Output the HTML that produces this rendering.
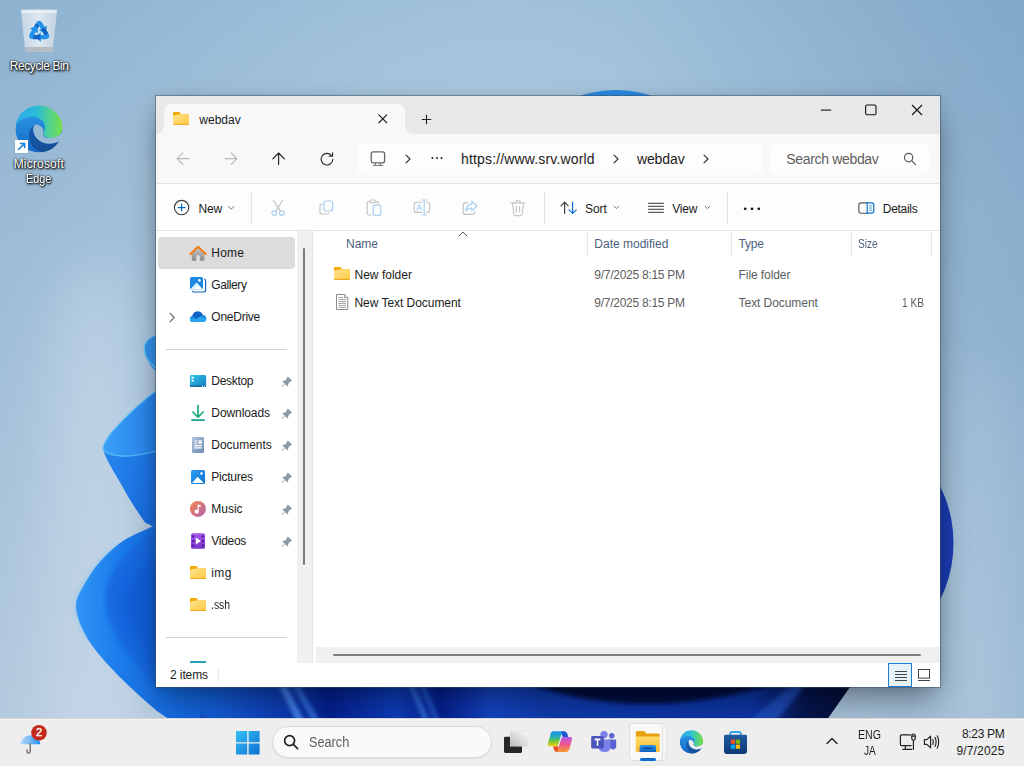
<!DOCTYPE html>
<html><head><meta charset="utf-8"><title>webdav - File Explorer</title>
<style>
*{box-sizing:border-box;margin:0;padding:0}
html,body{width:1024px;height:766px;overflow:hidden}
body{font-family:"Liberation Sans","DejaVu Sans",sans-serif;font-size:12px;color:#1b1b1b;position:relative;background:#a9c3d8}
#wall{position:absolute;left:0;top:0;width:1024px;height:766px}
.b{position:absolute}
.t{position:absolute;white-space:nowrap;line-height:1;font-size:12px;transform-origin:0 0}
.f14{font-size:14px}
.hd{color:#4c5f7d}
.gr{color:#5d5d5d}
.dt{color:#fff;text-shadow:0 0 2px rgba(0,0,0,.95),1px 1px 2px rgba(0,0,0,.9),0 1px 3px rgba(0,0,0,.7)}
svg{position:absolute;overflow:visible}
#win{left:156px;top:96px;width:784px;height:591px;background:#fff;box-shadow:0 0 0 1px rgba(60,78,98,.5),0 0 10px rgba(0,0,0,.08),0 14px 30px -4px rgba(0,0,0,.42)}
#titlebar{left:156px;top:96px;width:784px;height:39px;background:#e8e8e8}
#tab{left:164px;top:104px;width:241px;height:31px;background:#f8f8f8;border-radius:7px 7px 0 0}
#tabl{left:156px;top:126px;width:8px;height:9px;background:radial-gradient(circle at 0 0,#e8e8e8 7.5px,#f8f8f8 8.2px)}
#tabr{left:405px;top:126px;width:8px;height:9px;background:radial-gradient(circle at 100% 0,#e8e8e8 7.5px,#f8f8f8 8.2px)}
#navbar{left:156px;top:134px;width:784px;height:50px;background:#f8f8f8;border-bottom:1px solid #e3e3e3}
#addr{left:357px;top:143px;width:406px;height:32px;background:#fdfdfd;border-radius:5px}
#search{left:771px;top:143px;width:158px;height:32px;background:#fdfdfd;border-radius:5px}
#cmdbar{left:156px;top:184px;width:784px;height:47px;background:#fdfdfd;border-bottom:1px solid #e4e4e4}
.sep{width:1px;background:#e3e3e3}
#navpane{left:156px;top:231px;width:141px;height:432px;background:#fff}
#navtrack{left:297px;top:231px;width:15px;height:432px;background:#f0f0f0}
#files{left:312px;top:231px;width:628px;height:432px;background:#fff;border-left:1px solid #e6e6e6}
#status{left:156px;top:663px;width:784px;height:24px;background:#fff}
#taskbar{left:0;top:718px;width:1024px;height:48px;background:#eeeeee;border-top:1px solid #d6d5d3;box-shadow:inset 0 1px 0 #f4f4f4}
</style></head><body>
<svg id="wall" viewBox="0 0 1024 766">
<defs>
<linearGradient id="bgv" x1="0" y1="0" x2="0" y2="1"><stop offset="0" stop-color="#8bb0ce"/><stop offset="0.5" stop-color="#a3bfd8"/><stop offset="1" stop-color="#b6cbde"/></linearGradient>
<radialGradient id="bgc" cx="500" cy="200" r="560" gradientUnits="userSpaceOnUse"><stop offset="0" stop-color="#b7d3e6" stop-opacity=".75"/><stop offset="1" stop-color="#b7d3e6" stop-opacity="0"/></radialGradient>
<linearGradient id="bgr" x1="0" y1="0" x2="1" y2="0"><stop offset="0.6" stop-color="#6f9bbf" stop-opacity="0"/><stop offset="1" stop-color="#6f9bbf" stop-opacity=".36"/></linearGradient>
<linearGradient id="p2" x1="0" y1="0" x2="1" y2="1"><stop offset="0" stop-color="#2c8ef2"/><stop offset="1" stop-color="#1569de"/></linearGradient>
<linearGradient id="p2i" x1="0" y1="0" x2="1" y2="0"><stop offset="0" stop-color="#3b9ff6"/><stop offset="1" stop-color="#2380ea"/></linearGradient>
<linearGradient id="p3" x1="0" y1="0" x2="1" y2="0"><stop offset="0" stop-color="#2e94f5"/><stop offset="0.35" stop-color="#1c7bea"/><stop offset="1" stop-color="#1262da"/></linearGradient>
<linearGradient id="bot" x1="200" y1="0" x2="850" y2="0" gradientUnits="userSpaceOnUse"><stop offset="0" stop-color="#1262da"/><stop offset="0.06" stop-color="#1150c8"/><stop offset="0.12" stop-color="#0d3eb4"/><stop offset="0.2" stop-color="#041f8e"/><stop offset="0.3" stop-color="#0d3cb8"/><stop offset="0.37" stop-color="#041f8e"/><stop offset="0.45" stop-color="#1444c0"/><stop offset="0.53" stop-color="#0e3aac"/><stop offset="0.85" stop-color="#0c34a2"/><stop offset="0.93" stop-color="#06164f"/><stop offset="1" stop-color="#040d36"/></linearGradient>
<filter id="bl"><feGaussianBlur stdDeviation="5"/></filter>
<filter id="bl3" x="-100%" y="-50%" width="300%" height="200%"><feGaussianBlur stdDeviation="28"/></filter>
<filter id="bl2"><feGaussianBlur stdDeviation="2"/></filter>
</defs>
<rect width="1024" height="766" fill="url(#bgv)"/>
<rect width="1024" height="766" fill="url(#bgc)"/>
<rect width="1024" height="766" fill="url(#bgr)"/>
<ellipse cx="95" cy="640" rx="55" ry="380" fill="#cfdeec" opacity=".55" filter="url(#bl3)"/><ellipse cx="978" cy="660" rx="32" ry="300" fill="#bdd2e4" opacity=".45" filter="url(#bl3)"/>
<ellipse cx="616" cy="130" rx="69" ry="40" fill="#2a8ae2"/>
<ellipse cx="841" cy="543" rx="112.500" ry="120" fill="#1b3cb2"/>
<path d="M170 560L860 560L850 687L827.500 719L170 719Z" fill="url(#bot)"/>
<g filter="url(#bl2)"><path d="M278 684L285 684L305 722L297 722Z" fill="#4a8cf0" opacity=".9"/><path d="M292 684L298 684L320 722L313 722Z" fill="#3a7ae4" opacity=".8"/><path d="M408 684L413 684L430 722L424 722Z" fill="#3a78e2" opacity=".8"/><path d="M419 684L424 684L440 722L435 722Z" fill="#2e68d8" opacity=".7"/><path d="M530 684Q640 724 775 684Z" fill="#050f40"/><path d="M748 722L792 684L806 684L775 722Z" fill="#2050c0" opacity=".8"/><path d="M165 688L215 722L170 722Z" fill="#0d46b6" opacity=".7"/></g>
<!-- petal 1 -->
<path d="M160 333.500C151 336.500 144.200 341 144.200 348C144.500 358 150 366 160 376Z" fill="#3492ee"/>
<path d="M160 333.500C151 336.500 144.200 341 144.200 348C144.500 358 150 364 160 371" fill="none" stroke="#62c6fa" stroke-width="1.200"/>
<!-- petal 2 -->
<path d="M160 388C146 398 126 416 112 432C106 440 103 445 103 449C105 458 113 470 120.500 483C126 493 132 504 145 522.500L160 530Z" fill="url(#p2)"/>
<path d="M160 388C146 398 126 416 112 432C106 440 103 445 103 449C105 453 112 455.500 122 456C135 456.500 150 453 160 450Z" fill="url(#p2i)"/>
<path d="M160 388C146 398 126 416 112 432C106 440 103 445 103 449C105 453 112 455.500 122 456C135 456.500 150 453 160 450" fill="none" stroke="#58bcfa" stroke-width="1.300"/>
<!-- petal 3 -->
<path d="M160 519L156 525C140 532 128 537 118.700 544C106 554 96 565 89.400 576C82 588 76 597 76 605.700C76 616 82 630 89 641C97 653 108 665 118.700 676C131 688 145 701 157 711L168.700 719L200 719L200 519Z" fill="url(#p3)"/>
<path d="M165 525C150 533 142 540 133.400 547C126 554 120 560 115.800 567.500C109 579 105.500 588 105.500 597C105.500 606 107 615 110 623C114 633 120 643 127.500 652.700C136 664 146 676 165 695Z" fill="#1466de" filter="url(#bl2)" opacity=".85"/>
<path d="M175 545C150 560 125 580 122 600C121 620 140 650 175 690Z" fill="#0f58d2" filter="url(#bl)" opacity=".6"/>
<path d="M118.700 544C106 554 96 565 89.400 576C82 588 76 597 76 605.700C76 616 82 630 89 641" fill="none" stroke="#4aaef8" stroke-width="1.500" opacity=".6" filter="url(#bl2)"/>
</svg>
<!-- shared defs -->
<svg width="0" height="0" style="left:0;top:0"><defs>
<linearGradient id="ed1" x1="0" y1="0" x2="0" y2="1"><stop offset="0" stop-color="#2b9fea"/><stop offset="1" stop-color="#1769c6"/></linearGradient>
<linearGradient id="ed2" x1="0" y1="0" x2="1" y2="0"><stop offset="0" stop-color="#2fa6ec"/><stop offset=".45" stop-color="#2bbcd8"/><stop offset=".72" stop-color="#4fd090"/><stop offset=".95" stop-color="#72de50"/></linearGradient>
<linearGradient id="ed3" x1="0" y1="0" x2="1" y2="1"><stop offset="0" stop-color="#165cae"/><stop offset="1" stop-color="#114a90"/></linearGradient>
<mask id="edm" maskUnits="userSpaceOnUse" x="0" y="0" width="48" height="48"><circle cx="24" cy="24" r="23.600" fill="#fff"/><path d="M20.500 19.500C24 19.500 28.500 22 28.500 26.500C28.500 28.500 27.600 29.500 28.500 31C30 33.200 36 33.600 40 32.200C43 31.200 45.500 29.500 47 27L49 30L44.600 36C40 38.600 34 39.600 29 38C23 36 18.500 31 18.300 25C18.200 22 19 20.500 20.500 19.500Z" fill="#000"/></mask>
<g id="edgeicon" mask="url(#edm)"><circle cx="24" cy="24" r="23.600" fill="url(#ed1)"/><path d="M20.500 19.500C17 21 13 26 14 33C15 41 22 47.600 30 47.600C38 47 43.500 41 44.600 36C40 38.600 34 39.600 29 38C23 36 18.500 31 18.300 25C18.200 22 19 20.500 20.500 19.500Z" fill="url(#ed3)"/><path d="M.3 21C5 14 12 11.500 18 11.800C25 12 30 17 30 22C30 25 28.500 27 28.500 29C28.500 33.400 36 34 41 32.200C45.500 30.500 47.800 26 47.600 22A23.600 23.600 0 0 0 .3 21Z" fill="url(#ed2)"/></g>
</defs></svg>
<!-- recycle bin -->
<svg style="left:20px;top:9px" width="38" height="44" viewBox="0 0 38 44"><defs><linearGradient id="rb" x1="0" y1="0" x2="1" y2="0"><stop offset="0" stop-color="#c9d8e6"/><stop offset=".5" stop-color="#e3ebf2"/><stop offset="1" stop-color="#c6d5e3"/></linearGradient></defs><path d="M.9 1.400Q.8 .6 1.800 .6H36.200Q37.200 .6 37.100 1.400L32.800 41.600Q32.700 42.800 31.600 42.800H6.400Q5.300 42.800 5.200 41.600Z" fill="url(#rb)" opacity=".92"/><path d="M1.200 1.200H36.800L36.400 4H1.600Z" fill="#eef3f8" opacity=".8"/><path d="M4.800 38H33.200L32.800 41.600Q32.700 42.800 31.600 42.800H6.400Q5.300 42.800 5.200 41.600Z" fill="#b4bcc4"/><g transform="translate(19.200 23) scale(1.020)"><g id="rarr"><path d="M-5 -1.200L-1.300 -7.700" stroke="#1365c4" stroke-width="4.300" fill="none"/><path d="M-1.300 -7.700Q0 -9.900 1.300 -7.700L3.500 -3.900" stroke="#2192ec" stroke-width="4.300" fill="none" stroke-linejoin="round"/><path d="M7.700 -6.300L-.5 -1.500L6.200 1.300Z" fill="#2192ec"/></g><use href="#rarr" transform="rotate(120)"/><use href="#rarr" transform="rotate(240)"/></g></svg>
<!-- edge desktop -->
<svg style="left:15px;top:105px" width="48" height="48" viewBox="0 0 48 48"><use href="#edgeicon"/></svg>
<div class="b" style="left:15px;top:140px;width:13px;height:13px;background:#fff;box-shadow:0 0 1px rgba(0,0,0,.3)"></div>
<svg style="left:15px;top:140px" width="13" height="13" viewBox="0 0 13 13"><path d="M3.200 9.800L9.400 3.600M4.800 3.400H9.600V8.200" fill="none" stroke="#1a7fd8" stroke-width="1.500"/></svg>
<div class="b" id="win"></div>
<div class="b" id="titlebar"></div>
<div class="b" id="tab"></div><div class="b" id="tabl"></div><div class="b" id="tabr"></div>
<div class="b" id="navbar"></div>
<div class="b" id="addr"></div><div class="b" id="search"></div>
<div class="b" id="cmdbar"></div>
<div class="b" id="navpane"></div><div class="b" id="navtrack"></div>
<div class="b" id="files"></div>
<div class="b" id="status"></div>
<!-- title bar icons -->
<svg style="left:172px;top:111px" width="18" height="15" viewBox="0 0 18 15"><defs><linearGradient id="fg" x1="0" y1="0" x2="1" y2="1"><stop offset="0" stop-color="#ffe595"/><stop offset="1" stop-color="#ffc83d"/></linearGradient></defs><path d="M1 2.2Q1 1 2.2 1H6.6Q7.4 1 8 1.7L9.2 3.2H15.8Q17 3.200 17 4.400V6H1Z" fill="#f2a900"/><path d="M1 5.400Q1 4.600 2 4.400L8 3.200H15.800Q17 3.200 17 4.400V12.800Q17 14 15.800 14H2.200Q1 14 1 12.800Z" fill="url(#fg)"/><path d="M1.200 13.300H16.800" stroke="#eea41c" stroke-width="1"/></svg>
<svg style="left:377.500px;top:114px" width="10" height="10" viewBox="0 0 10 10"><path d="M.6 .6L9 9M9 .6L.6 9" stroke="#1f1f1f" stroke-width="1.100" fill="none"/></svg>
<svg style="left:421px;top:114px" width="11" height="11" viewBox="0 0 11 11"><path d="M5.500 .8V10.200M.8 5.500H10.200" stroke="#1f1f1f" stroke-width="1.100" fill="none"/></svg>
<svg style="left:820px;top:104px" width="104" height="12" viewBox="0 0 104 12"><g stroke="#111" stroke-width="1.100" fill="none"><path d="M.8 6.100H11.200"/><rect x="45.600" y="1" width="10.400" height="9.800" rx="1.600"/><path d="M92 1L102 11M102 1L92 11"/></g></svg>
<!-- nav bar icons -->
<svg style="left:176px;top:152px" width="160" height="14" viewBox="0 0 160 14"><g fill="none" stroke-width="1.150" stroke-linecap="round" stroke-linejoin="round"><path d="M13 6.600H1.200M6.800 .8L1 6.600L6.800 12.400" stroke="#b9b9b9"/><path d="M49 6.600H60.800M55.200 .8L61 6.600L55.200 12.400" stroke="#b9b9b9"/><path d="M102.600 12.600V1M96.800 6.800L102.600 1L108.400 6.800" stroke="#242424"/><path d="M155.400 3.400A5.800 5.800 0 1 0 156.800 7.200M156.600 .8V4.200H153.200" stroke="#2c2c2c"/></g></svg>
<svg style="left:370px;top:151px" width="76" height="16" viewBox="0 0 76 16"><g fill="none" stroke-linecap="round" stroke-linejoin="round"><rect x="1.200" y=".8" width="13.400" height="11" rx="2" stroke="#666" stroke-width="1.300"/><path d="M5.400 12V14.300M10.400 12V14.300M3.200 14.500H12.600" stroke="#777" stroke-width="1.200"/><path d="M36 4.200L40 8L36 11.800" stroke="#333" stroke-width="1.150"/></g><g fill="#222"><circle cx="62.400" cy="7" r="1"/><circle cx="67" cy="7" r="1"/><circle cx="71.500" cy="7" r="1"/></g></svg>
<svg style="left:612px;top:154px" width="100" height="10" viewBox="0 0 100 10"><g fill="none" stroke="#333" stroke-width="1.150" stroke-linecap="round" stroke-linejoin="round"><path d="M2 1.200L6 5L2 8.800"/><path d="M92 1.200L96 5L92 8.800"/></g></svg>
<svg style="left:903px;top:152px" width="14" height="14" viewBox="0 0 14 14"><g fill="none" stroke="#555" stroke-width="1.150" stroke-linecap="round"><circle cx="5.600" cy="5.600" r="4.200"/><path d="M8.700 8.700L12.600 12.600"/></g></svg>
<!-- command bar -->
<svg style="left:173px;top:199px" width="64" height="18" viewBox="0 0 64 18"><g fill="none" stroke-linecap="round" stroke-linejoin="round"><circle cx="8.600" cy="8.600" r="7.200" stroke="#3a3a3a" stroke-width="1.100"/><path d="M8.600 5.200V12M5.200 8.600H12" stroke="#0067c0" stroke-width="1.200"/><path d="M55.600 7.600L58.200 10.200L60.800 7.600" stroke="#777" stroke-width="1"/></g></svg>
<div class="b sep" style="left:251px;top:192px;height:32px"></div>
<svg style="left:270px;top:199px" width="16" height="18" viewBox="0 0 16 18"><g fill="none" stroke-linecap="round"><path d="M3.400 1.200L10.400 12.400M12.600 1.200L5.600 12.400" stroke="#c2c2c2" stroke-width="1.150"/><circle cx="4.200" cy="14" r="2.300" stroke="#a9cef2" stroke-width="1.150"/><circle cx="11.800" cy="14" r="2.300" stroke="#a9cef2" stroke-width="1.150"/></g></svg>
<svg style="left:319px;top:200px" width="16" height="16" viewBox="0 0 16 16"><g fill="none" stroke-linejoin="round"><path d="M3.400 4.200H2.600Q1 4.200 1 5.800V12.400Q1 14 2.600 14H8.200Q9.800 14 9.800 12.800" stroke="#c2c2c2" stroke-width="1.150"/><rect x="4.800" y="1" width="8.800" height="10" rx="2" stroke="#a9cef2" stroke-width="1.200"/></g></svg>
<svg style="left:366px;top:199px" width="17" height="18" viewBox="0 0 17 18"><g fill="none" stroke-linejoin="round"><path d="M5.600 16H2.600Q1.200 16 1.200 14.600V4Q1.200 2.600 2.600 2.600H4M9.600 2.600H11Q12.400 2.600 12.400 4V5.200" stroke="#c2c2c2" stroke-width="1.150"/><rect x="4.200" y="1" width="5.200" height="2.600" rx="1.200" stroke="#c2c2c2" stroke-width="1.100"/><rect x="7.200" y="6.200" width="7.600" height="10.200" rx="1.600" stroke="#a9cef2" stroke-width="1.200"/></g></svg>
<svg style="left:413px;top:199px" width="18" height="18" viewBox="0 0 18 18"><g fill="none" stroke-linecap="round" stroke-linejoin="round"><path d="M8.600 3.200H3.400Q1.200 3.200 1.200 5.400V11.200Q1.200 13.400 3.400 13.400H8.600M13.600 3.200H14.600Q16.600 3.200 16.600 5.400V11.200Q16.600 13.400 14.600 13.400H13.600" stroke="#c2c2c2" stroke-width="1.150"/><path d="M11.200 1.200V15.800M9.400 1H13M9.400 16H13" stroke="#a9cef2" stroke-width="1.200"/><path d="M4 11.200L6.300 5.400L8.600 11.200M4.900 9.200H7.700" stroke="#a9cef2" stroke-width="1"/></g></svg>
<svg style="left:462px;top:200px" width="17" height="16" viewBox="0 0 17 16"><g fill="none" stroke-linecap="round" stroke-linejoin="round"><path d="M5.600 2.800H3.400Q1.200 2.800 1.200 5V12.200Q1.200 14.400 3.400 14.400H10.600Q12.800 14.400 12.800 12.200V11.600" stroke="#c2c2c2" stroke-width="1.150"/><path d="M9.800 1.400L15 6L9.800 10.600V8Q6 7.800 3.800 10.800Q4.400 4.800 9.800 4.200Z" stroke="#a9cef2" stroke-width="1.200"/></g></svg>
<svg style="left:510px;top:199px" width="16" height="18" viewBox="0 0 16 18"><g fill="none" stroke="#c6c6c6" stroke-width="1.150" stroke-linecap="round" stroke-linejoin="round"><path d="M1 3.800H15M5.600 3.600Q5.600 1.200 8 1.200Q10.400 1.200 10.400 3.600M2.600 4L3.800 14.800Q4 16.600 5.600 16.600H10.400Q12 16.600 12.200 14.800L13.400 4M6.400 7.200V13M9.600 7.200V13"/></g></svg>
<div class="b sep" style="left:544px;top:192px;height:32px"></div>
<svg style="left:560px;top:201px" width="60" height="14" viewBox="0 0 60 14"><g fill="none" stroke-linecap="round" stroke-linejoin="round" stroke-width="1.200"><path d="M4.600 12.400V1.200M1 4.800L4.600 1.200L8.200 4.800" stroke="#444"/><path d="M12.600 1.200V12.400M9 8.800L12.600 12.400L16.200 8.800" stroke="#0a6fd0"/><path d="M54 5.200L56.400 7.600L58.800 5.200" stroke="#777" stroke-width="1"/></g></svg>
<svg style="left:648px;top:202px" width="64" height="12" viewBox="0 0 64 12"><g fill="none" stroke-linecap="round" stroke-linejoin="round"><path d="M.5 1.300H15.500M.5 4.300H15.500M.5 7.300H15.500M.5 10.300H15.500" stroke="#333" stroke-width="1"/><path d="M57 4.200L59.400 6.600L61.800 4.200" stroke="#777" stroke-width="1"/></g></svg>
<div class="b sep" style="left:727px;top:192px;height:32px"></div>
<svg style="left:743px;top:206px" width="18" height="5" viewBox="0 0 18 5"><g fill="#1a1a1a"><circle cx="2.200" cy="2.800" r="1.400"/><circle cx="9" cy="2.800" r="1.400"/><circle cx="15.800" cy="2.800" r="1.400"/></g></svg>
<svg style="left:858px;top:202px" width="17" height="12" viewBox="0 0 17 12"><g fill="none" stroke-linecap="round" stroke-linejoin="round"><path d="M9 .8H3Q.8 .8 .8 3V9Q.8 11.200 3 11.200H9" stroke="#555" stroke-width="1.150"/><path d="M9.200 .8H13.600Q15.800 .8 15.800 3V9Q15.800 11.200 13.600 11.200H9.200Z" stroke="#0a6fd0" stroke-width="1.200"/><path d="M11.600 3.800H13.400M11.600 6H13.400M11.600 8.200H13.400" stroke="#0a6fd0" stroke-width=".8"/></g></svg>
<!-- nav pane -->
<div class="b" style="left:158px;top:237px;width:137px;height:32px;background:#dcdcdc;border-radius:4px"></div>
<div class="b" style="left:303px;top:248px;width:2px;height:317px;background:#7c7c7c;border-radius:1px"></div>
<div class="b" style="left:166px;top:349px;width:121px;height:1px;background:#d4d4d4"></div>
<div class="b" style="left:166px;top:637px;width:121px;height:1px;background:#d4d4d4"></div>
<div class="b" style="left:190px;top:661px;width:16px;height:2px;background:#2aa0b8"></div>
<svg style="left:168px;top:312px" width="8" height="11" viewBox="0 0 8 11"><path d="M2 1.200L6.200 5.500L2 9.800" fill="none" stroke="#6a6a6a" stroke-width="1.200" stroke-linecap="round" stroke-linejoin="round"/></svg>
<!-- home -->
<svg style="left:189px;top:244px" width="18" height="18" viewBox="0 0 18 18"><defs><linearGradient id="hg" x1="0" y1="0" x2="0" y2="1"><stop offset="0" stop-color="#c9c9c9"/><stop offset="1" stop-color="#8b8b8b"/></linearGradient></defs><path d="M2.800 9L9.100 3.200L15.400 9V15.800Q15.400 16.800 14.400 16.800H10.900V11.200H7.300V16.800H3.800Q2.800 16.800 2.800 15.800Z" fill="url(#hg)"/><path d="M1.300 10.300L9.100 2.700L16.900 10.300" fill="none" stroke="#f07c12" stroke-width="2" stroke-linecap="round" stroke-linejoin="round"/></svg>
<!-- gallery -->
<svg style="left:189px;top:276px" width="18" height="18" viewBox="0 0 18 18"><path d="M15.200 3.200Q16.600 3.400 16.600 5V14Q16.600 16 14.600 16H5Q3.600 16 3.400 14.800" fill="none" stroke="#1565c0" stroke-width="1.200"/><rect x="1" y="1" width="13" height="12.600" rx="1.600" fill="#1c88e4"/><path d="M1.400 13.200L7.600 6.800L13.800 13.200Q13.600 13.600 13 13.600H2.200Q1.600 13.600 1.400 13.200Z" fill="#fff"/><path d="M1.400 13.200L7.600 6.800L10 9.300L4.500 13.600H2.200Q1.600 13.600 1.400 13.200Z" fill="#d6ecff"/><circle cx="10.400" cy="4.400" r="1.300" fill="#fff"/></svg>
<!-- onedrive -->
<svg style="left:189px;top:310px" width="18" height="13" viewBox="0 0 18 13"><path d="M4.200 12Q.8 12 .8 8.900Q.8 6.300 3.400 5.800Q4.600 1.400 9 1.400Q12.400 1.400 13.700 4.900Q17.300 5.100 17.300 8.600Q17.300 12 14 12Z" fill="#1b86e2"/><path d="M3.400 5.800Q4.600 1.400 9 1.400Q12.400 1.400 13.700 4.900L8 8.400Z" fill="#0f5fc4"/><path d="M.8 8.900Q.8 12 4.200 12H14Q17.300 12 17.300 8.600L11 6.600L6.200 9.600L2.600 7.400Q.8 8 .8 8.900Z" fill="#27a6ec"/></svg>
<!-- desktop -->
<svg style="left:189px;top:374px" width="18" height="14" viewBox="0 0 18 14"><defs><linearGradient id="dg" x1="0" y1="0" x2="1" y2="1"><stop offset="0" stop-color="#35c6ec"/><stop offset="1" stop-color="#137dbd"/></linearGradient></defs><rect x=".9" y="1" width="16.200" height="11.800" rx="1.300" fill="url(#dg)"/><rect x=".9" y="11.600" width="16.200" height="1.200" fill="#0f5f92"/><rect x="2.600" y="2.700" width="2.100" height="1.900" fill="#fff"/><rect x="2.600" y="5.900" width="2.100" height="1.700" fill="#fff"/><rect x="12.800" y="11.600" width="1" height="1.200" fill="#dff"/><rect x="14.800" y="11.600" width="1" height="1.200" fill="#dff"/></svg>
<!-- downloads -->
<svg style="left:190px;top:404px" width="16" height="18" viewBox="0 0 16 18"><g fill="none" stroke="#1aac7c" stroke-width="1.700" stroke-linecap="round" stroke-linejoin="round"><path d="M8 1.400V12.600M2.800 8L8 13.200L13.200 8"/><path d="M2 16.200H14" stroke="#18a58c"/></g></svg>
<!-- documents -->
<svg style="left:191px;top:436px" width="14" height="18" viewBox="0 0 14 18"><defs><linearGradient id="dcg" x1="0" y1="0" x2="1" y2="1"><stop offset="0" stop-color="#b1c3db"/><stop offset="1" stop-color="#6c8ab1"/></linearGradient></defs><rect x="1" y="1" width="12" height="16" rx="1.300" fill="url(#dcg)"/><path d="M3.200 5H6.400M3.200 7.200H6.400M3.200 9.600H10.800M3.200 11.900H10.800" stroke="#fff" stroke-width="1.100"/><rect x="7.600" y="4.400" width="3.200" height="3.400" fill="#fff"/></svg>
<!-- pictures -->
<svg style="left:190px;top:469px" width="16" height="16" viewBox="0 0 16 16"><defs><linearGradient id="pg" x1="0" y1="0" x2="1" y2="1"><stop offset="0" stop-color="#2e9df2"/><stop offset="1" stop-color="#0f6fd0"/></linearGradient></defs><rect x="1" y="1" width="14" height="14" rx="1.500" fill="url(#pg)"/><path d="M2.200 13.900L7.500 7.800L13.800 13.900Z" fill="#fff"/><circle cx="11.500" cy="4.500" r="1.300" fill="#fff"/></svg>
<!-- music -->
<svg style="left:189px;top:500px" width="18" height="18" viewBox="0 0 18 18"><defs><linearGradient id="mg" x1="0" y1="0" x2="1" y2="1"><stop offset="0" stop-color="#f58648"/><stop offset="1" stop-color="#b060b2"/></linearGradient></defs><circle cx="8.900" cy="8.900" r="8" fill="url(#mg)"/><path d="M8.600 4.200L11.800 5.200V7L9.800 6.400V11.600A2.100 1.900 0 1 1 8.600 9.900Z" fill="#fff"/></svg>
<!-- videos -->
<svg style="left:190px;top:532px" width="16" height="18" viewBox="0 0 16 18"><defs><linearGradient id="vg" x1="0" y1="0" x2="0" y2="1"><stop offset="0" stop-color="#a556ec"/><stop offset="1" stop-color="#7a33c9"/></linearGradient></defs><rect x="1" y="1.300" width="14" height="15.500" rx="1.500" fill="url(#vg)"/><g fill="#43168a"><rect x="2.300" y="3.300" width="1.900" height="2"/><rect x="2.300" y="8" width="1.900" height="2"/><rect x="2.300" y="12.600" width="1.900" height="2"/><rect x="11.800" y="3.300" width="1.900" height="2"/><rect x="11.800" y="8" width="1.900" height="2"/><rect x="11.800" y="12.600" width="1.900" height="2"/></g><path d="M5.800 5.600L11 9L5.800 12.400Z" fill="#fff"/></svg>
<svg style="left:189px;top:565px" width="18" height="15" viewBox="0 0 18 15"><path d="M1 2.200Q1 1 2.200 1H6.600Q7.400 1 8 1.700L9.200 3.200H15.800Q17 3.200 17 4.400V6H1Z" fill="#f2a900"/><path d="M1 5.400Q1 4.600 2 4.400L8 3.200H15.800Q17 3.200 17 4.400V12.800Q17 14 15.800 14H2.200Q1 14 1 12.800Z" fill="url(#fg)"/><path d="M1.200 13.400H16.800" stroke="#eea41c" stroke-width="1"/></svg>
<svg style="left:189px;top:597px" width="18" height="15" viewBox="0 0 18 15"><path d="M1 2.200Q1 1 2.200 1H6.600Q7.400 1 8 1.700L9.200 3.200H15.800Q17 3.200 17 4.400V6H1Z" fill="#f2a900"/><path d="M1 5.400Q1 4.600 2 4.400L8 3.200H15.800Q17 3.200 17 4.400V12.800Q17 14 15.800 14H2.200Q1 14 1 12.800Z" fill="url(#fg)"/><path d="M1.200 13.400H16.800" stroke="#eea41c" stroke-width="1"/></svg>
<svg style="left:281px;top:376px" width="12" height="12" viewBox="0 0 12 12"><path d="M6.800 .6L11.300 4.800L10 5.200L8 6.800L6.500 10.400L4 7.900L1 10.900L.6 10.500L3.600 7.500L1.200 5.200L4.600 4.200L5.900 1.900Z" fill="#8e9aa3"/></svg>
<svg style="left:281px;top:408px" width="12" height="12" viewBox="0 0 12 12"><path d="M6.800 .6L11.300 4.800L10 5.200L8 6.800L6.500 10.400L4 7.900L1 10.900L.6 10.500L3.600 7.500L1.200 5.200L4.600 4.200L5.900 1.900Z" fill="#8e9aa3"/></svg>
<svg style="left:281px;top:440px" width="12" height="12" viewBox="0 0 12 12"><path d="M6.800 .6L11.300 4.800L10 5.200L8 6.800L6.500 10.400L4 7.900L1 10.900L.6 10.500L3.600 7.500L1.200 5.200L4.600 4.200L5.900 1.900Z" fill="#8e9aa3"/></svg>
<svg style="left:281px;top:472px" width="12" height="12" viewBox="0 0 12 12"><path d="M6.800 .6L11.300 4.800L10 5.200L8 6.800L6.500 10.400L4 7.900L1 10.900L.6 10.500L3.600 7.500L1.200 5.200L4.600 4.200L5.900 1.900Z" fill="#8e9aa3"/></svg>
<svg style="left:281px;top:504px" width="12" height="12" viewBox="0 0 12 12"><path d="M6.800 .6L11.300 4.800L10 5.200L8 6.800L6.500 10.400L4 7.900L1 10.900L.6 10.500L3.600 7.500L1.200 5.200L4.600 4.200L5.900 1.900Z" fill="#8e9aa3"/></svg>
<svg style="left:281px;top:536px" width="12" height="12" viewBox="0 0 12 12"><path d="M6.800 .6L11.300 4.800L10 5.200L8 6.800L6.500 10.400L4 7.900L1 10.900L.6 10.500L3.600 7.500L1.200 5.200L4.600 4.200L5.900 1.900Z" fill="#8e9aa3"/></svg>
<!-- file list -->
<div class="b sep" style="left:587px;top:232px;height:24px;background:#e6e6e6"></div>
<div class="b sep" style="left:731px;top:232px;height:24px;background:#e6e6e6"></div>
<div class="b sep" style="left:851px;top:232px;height:24px;background:#e6e6e6"></div>
<div class="b sep" style="left:931px;top:232px;height:24px;background:#e6e6e6"></div>
<svg style="left:458px;top:231px" width="10" height="6" viewBox="0 0 10 6"><path d="M1 5L5 1L9 5" fill="none" stroke="#555" stroke-width="1" stroke-linecap="round" stroke-linejoin="round"/></svg>
<svg style="left:333px;top:266px" width="18" height="15" viewBox="0 0 18 15"><path d="M1 2.200Q1 1 2.200 1H6.600Q7.400 1 8 1.700L9.200 3.200H15.800Q17 3.200 17 4.400V6H1Z" fill="#f2a900"/><path d="M1 5.400Q1 4.600 2 4.400L8 3.200H15.800Q17 3.200 17 4.400V12.800Q17 14 15.800 14H2.200Q1 14 1 12.800Z" fill="url(#fg)"/><path d="M1.200 13.400H16.800" stroke="#eea41c" stroke-width="1"/></svg>
<svg style="left:335px;top:293px" width="14" height="18" viewBox="0 0 14 18"><path d="M1.500 1.500H9.800L12.800 4.500V16.500H1.500Z" fill="#fff" stroke="#8c8c8c" stroke-width="1"/><path d="M9.600 1.600V4.700H12.700" fill="#eee" stroke="#8c8c8c" stroke-width=".9"/><path d="M3.400 4.400H8M3.400 6.400H11M3.400 8.400H11M3.400 10.400H11M3.400 12.400H11M3.400 14.400H11" stroke="#a2a2a2" stroke-width="1"/></svg>
<!-- hscroll -->
<div class="b" style="left:316px;top:647px;width:624px;height:16px;background:#f0f0f0"></div>
<div class="b" style="left:333px;top:654px;width:588px;height:2px;background:#7e7e7e;border-radius:1px"></div>
<!-- status -->
<div class="b sep" style="left:218px;top:669px;height:13px;background:#e9e9e9"></div>
<div class="b" style="left:888px;top:663px;width:24px;height:24px;background:#e6f2fa;border:1px solid #1a7fd4"></div>
<svg style="left:894px;top:670px" width="14" height="12" viewBox="0 0 14 12"><path d="M1 1.500H13M1 4.500H13M1 7.500H13M1 10.500H13" stroke="#444" stroke-width="1"/></svg>
<svg style="left:917px;top:668px" width="14" height="14" viewBox="0 0 14 14"><rect x="1.500" y="1.500" width="11" height="8.600" fill="none" stroke="#444" stroke-width="1"/><path d="M1 12.500H13" stroke="#444" stroke-width="1"/></svg>
<!-- taskbar -->
<div class="b" id="taskbar"></div>
<!-- weather -->
<svg style="left:19px;top:724px" width="30" height="32" viewBox="0 0 30 32"><defs><linearGradient id="um" x1="0" y1="0" x2="1" y2="0"><stop offset="0" stop-color="#b2dafc"/><stop offset=".45" stop-color="#7cbcf6"/><stop offset="1" stop-color="#1f8af0"/></linearGradient></defs><path d="M1.400 20.600Q2.400 11.800 11.400 11.200Q20.400 11.800 21.400 20.600Q19.600 19.400 18 20.600Q16.400 19.400 14.800 20.600Q13.200 19.400 11.400 20.600Q9.800 19.400 8.200 20.600Q6.600 19.400 4.800 20.600Q3.200 19.400 1.400 20.600Z" fill="url(#um)"/><path d="M11.200 20V27.400Q11.200 29.200 9.600 29.200Q8 29.200 8 27.600V26" fill="none" stroke="#6a6462" stroke-width="1.300" stroke-linecap="round"/><circle cx="20" cy="8.700" r="7.800" fill="#c42b1c"/></svg>
<div class="t" style="left:35.900px;top:727px;color:#fff;font-size:11px;-webkit-text-stroke:.35px #fff">2</div>
<!-- start -->
<svg style="left:236px;top:731px" width="24" height="24" viewBox="0 0 24 24"><defs><linearGradient id="wg" x1="0" y1="0" x2="1" y2="1"><stop offset="0" stop-color="#36c0f5"/><stop offset="1" stop-color="#0c6fd2"/></linearGradient></defs><path d="M0 0H11.200V11.200H0ZM12.600 0H23.600V11.200H12.600ZM0 12.600H11.200V23.600H0ZM12.600 12.600H23.600V23.600H12.600Z" fill="url(#wg)"/></svg>
<!-- search pill -->
<div class="b" style="left:272px;top:726px;width:220px;height:32px;border-radius:16px;background:#fafafa;border:1px solid #d9d9d9;box-shadow:0 1px 1px rgba(0,0,0,.06)"></div>
<svg style="left:283px;top:734px" width="16" height="16" viewBox="0 0 16 16"><g fill="none" stroke="#222" stroke-width="1.700" stroke-linecap="round"><circle cx="6.600" cy="6.600" r="5"/><path d="M10.400 10.400L14.600 14.600"/></g></svg>
<!-- task view -->
<svg style="left:503px;top:730px" width="26" height="24" viewBox="0 0 26 24"><defs><linearGradient id="tv" x1="0" y1="1" x2="1" y2="0"><stop offset="0" stop-color="#bdbdbd"/><stop offset="1" stop-color="#fafafa"/></linearGradient></defs><rect x="7" y=".8" width="18" height="15.600" rx="1.500" fill="url(#tv)" stroke="#e4e4e4" stroke-width=".6"/><path d="M1 8.200Q1 6.800 2.400 6.800H7V16.400H19V21.600Q19 23 17.600 23H2.400Q1 23 1 21.600Z" fill="#262626"/></svg>
<!-- copilot -->
<svg style="left:547px;top:730px" width="26" height="24" viewBox="0 0 26 24"><defs><linearGradient id="cp1" x1="0" y1="0" x2="0" y2="1"><stop offset="0" stop-color="#1a8ee8"/><stop offset=".4" stop-color="#24b0b4"/><stop offset=".62" stop-color="#62c23c"/><stop offset="1" stop-color="#f6d418"/></linearGradient><linearGradient id="cp2" x1="0" y1="0" x2="0" y2="1"><stop offset="0" stop-color="#b257ea"/><stop offset=".5" stop-color="#f0588c"/><stop offset="1" stop-color="#fa9c30"/></linearGradient></defs><path d="M13.500 1.200H17.400Q19.600 1.300 20.300 3.800L21.300 7.200H15.800Z" fill="#1c56d4"/><path d="M6 16.200H11.200L12.600 22H9.600Q7.600 21.900 6.900 19.600Z" fill="#e84e28"/><path d="M5.800 1.200H15.200L11.300 14.400Q10.800 16.200 8.800 16.200H2.400Q.4 16.200 1 13.600L3.600 3.800Q4.200 1.400 5.800 1.200Z" fill="url(#cp1)"/><path d="M16.200 7H23Q25.600 7 24.900 9.800L22.200 19.600Q21.400 22 19.200 22H10.200L14.200 8.800Q14.700 7 16.200 7Z" fill="url(#cp2)"/></svg>
<!-- teams -->
<svg style="left:590px;top:730px" width="27" height="23" viewBox="0 0 27 23"><circle cx="21.800" cy="5.800" r="2.700" fill="#5b63d3"/><path d="M17.500 9.400H25Q26.200 9.400 26.200 10.600V16Q26.200 19.400 22.800 19.400Q20.500 19.400 19.500 17.600Z" fill="#5b63d3"/><circle cx="14" cy="4.600" r="3.700" fill="#7b83eb"/><path d="M8.500 9.400H19Q20.400 9.400 20.400 10.800V17Q20.400 22 14.500 22Q8.500 22 8.500 17Z" fill="#7b83eb"/><rect x="1.200" y="6" width="12.600" height="12.600" rx="1.400" fill="#4b53bc"/><path d="M4.600 9.400H10.400M7.500 9.400V15.800" stroke="#fff" stroke-width="1.600" fill="none"/></svg>
<!-- explorer active -->
<div class="b" style="left:633px;top:723px;width:34px;height:38px;background:#f6f6f6;border:1px solid #e0e0e0;border-radius:4px"></div>
<div class="b" style="left:629px;top:723px;width:34px;height:38px;background:#f9f9f9;border:1px solid #dedede;border-radius:4px"></div>
<svg style="left:635px;top:730px" width="26" height="23" viewBox="0 0 26 23"><defs><linearGradient id="eg" x1="0" y1="0" x2="0" y2="1"><stop offset="0" stop-color="#ffdc6a"/><stop offset="1" stop-color="#f9b92e"/></linearGradient><linearGradient id="eb" x1="0" y1="0" x2="0" y2="1"><stop offset="0" stop-color="#2a95e8"/><stop offset="1" stop-color="#0f62c0"/></linearGradient></defs><path d="M.8 2.600Q.8 1 2.400 1H8.400Q9.400 1 10 1.800L11.400 3.600H23Q24.800 3.600 24.800 5.200V8H.8Z" fill="#e6a10c"/><path d="M.8 6.400H24.800V20.400Q24.800 22 23.200 22H2.400Q.8 22 .8 20.400Z" fill="url(#eg)"/><path d="M4.600 22V17Q4.600 15 6.600 15H19Q21 15 21 17V22Z" fill="url(#eb)"/><rect x="8" y="17.400" width="9.600" height="1.600" rx=".8" fill="#0b4c9c"/></svg>
<div class="b" style="left:640px;top:758px;width:16px;height:3px;background:#0c6cd0;border-radius:1.500px"></div>
<!-- edge -->
<svg style="left:679px;top:730px" width="25" height="24" viewBox="0 0 48 48"><use href="#edgeicon"/></svg>
<!-- store -->
<svg style="left:723px;top:730px" width="25" height="25" viewBox="0 0 25 25"><defs><linearGradient id="sg" x1="0" y1="0" x2="0" y2="1"><stop offset="0" stop-color="#1f5aa2"/><stop offset="1" stop-color="#0e3a74"/></linearGradient></defs><path d="M7.200 6V4Q7.200 2 9.200 2H15.800Q17.800 2 17.800 4V6" fill="none" stroke="#35a2ea" stroke-width="2"/><path d="M1 6.200Q1 4.800 2.400 4.800H22.600Q24 4.800 24 6.200V21Q24 24 21 24H4Q1 24 1 21Z" fill="url(#sg)"/><rect x="7.800" y="9.600" width="4.200" height="4.200" fill="#f25022"/><rect x="12.800" y="9.600" width="4.200" height="4.200" fill="#7fba00"/><rect x="7.800" y="14.600" width="4.200" height="4.200" fill="#00a4ef"/><rect x="12.800" y="14.600" width="4.200" height="4.200" fill="#ffb900"/></svg>
<!-- tray -->
<svg style="left:826px;top:737px" width="12" height="8" viewBox="0 0 12 8"><path d="M1 6.600L6 1.600L11 6.600" fill="none" stroke="#222" stroke-width="1.400" stroke-linecap="round" stroke-linejoin="round"/></svg>
<svg style="left:899px;top:733px" width="18" height="18" viewBox="0 0 18 18"><g fill="none" stroke="#222" stroke-width="1.200" stroke-linejoin="round" stroke-linecap="round"><path d="M11.400 1.800H2.600Q1.400 1.800 1.400 3V11.400Q1.400 12.600 2.600 12.600H12.200"/><path d="M6.400 12.800V16.200M3.800 16.400H12.600M14.400 7.600V16.400"/><rect x="12.800" y="1" width="3.400" height="6" rx="1.600" fill="#eee"/><path d="M13 3.200H16"/></g></svg>
<svg style="left:923px;top:734px" width="18" height="16" viewBox="0 0 18 16"><g fill="none" stroke="#222" stroke-width="1.150" stroke-linejoin="round" stroke-linecap="round"><path d="M1.400 5.600H3.800L7.600 2.200V13.800L3.800 10.400H1.400Z"/><path d="M9.800 5.400Q11 8 9.800 10.600M12 3.600Q14.200 8 12 12.400M14.200 1.800Q17.200 8 14.200 14.200"/></g></svg>
<div class="t" id="t1" style="left:199.3px;top:114px;letter-spacing:0.021px">webdav</div>
<div class="t" id="a1" style="left:461.1px;top:152px;font-size:14px;letter-spacing:0.151px">https://www.srv.world</div>
<div class="t" id="a2" style="left:636.9px;top:152px;font-size:14px;letter-spacing:-0.094px">webdav</div>
<div class="t gr" id="a3" style="left:786.2px;top:152px;font-size:14px;letter-spacing:-0.324px">Search webdav</div>
<div class="t" id="c1" style="left:198.4px;top:203px;letter-spacing:-0.105px">New</div>
<div class="t" id="c2" style="left:585.1px;top:203px;letter-spacing:-0.129px">Sort</div>
<div class="t" id="c3" style="left:672.2px;top:203px;letter-spacing:-0.149px">View</div>
<div class="t" id="c4" style="left:882.8px;top:203px;letter-spacing:-0.298px">Details</div>
<div class="t hd" id="h1" style="left:346.0px;top:238px">Name</div>
<div class="t hd" id="h2" style="left:594.3px;top:238px">Date modified</div>
<div class="t hd" id="h3" style="left:738.6px;top:238px;letter-spacing:-0.254px">Type</div>
<div class="t hd" id="h4" style="left:858.4px;top:238px;transform:scaleX(0.840)">Size</div>
<div class="t" id="r1a" style="left:354.5px;top:269px;letter-spacing:0.014px">New folder</div>
<div class="t gr" id="r1b" style="left:594.3px;top:269px;letter-spacing:-0.265px">9/7/2025 8:15 PM</div>
<div class="t gr" id="r1c" style="left:738.6px;top:269px;letter-spacing:-0.090px">File folder</div>
<div class="t" id="r2a" style="left:354.5px;top:297px;letter-spacing:-0.044px">New Text Document</div>
<div class="t gr" id="r2b" style="left:594.3px;top:297px;letter-spacing:-0.265px">9/7/2025 8:15 PM</div>
<div class="t gr" id="r2c" style="left:738.6px;top:297px;letter-spacing:-0.065px">Text Document</div>
<div class="t gr" id="r2d" style="left:901.9px;top:297px;transform:scaleX(0.850)">1 KB</div>
<div class="t" id="n1" style="left:211.3px;top:247px;letter-spacing:0.171px">Home</div>
<div class="t" id="n2" style="left:211.3px;top:279px;letter-spacing:-0.388px">Gallery</div>
<div class="t" id="n3" style="left:211.3px;top:311px;letter-spacing:-0.248px">OneDrive</div>
<div class="t" id="n4" style="left:211.3px;top:375px;letter-spacing:-0.304px">Desktop</div>
<div class="t" id="n5" style="left:211.3px;top:407px;letter-spacing:-0.086px">Downloads</div>
<div class="t" id="n6" style="left:211.3px;top:439px;letter-spacing:-0.023px">Documents</div>
<div class="t" id="n7" style="left:211.3px;top:471px;letter-spacing:-0.232px">Pictures</div>
<div class="t" id="n8" style="left:211.3px;top:503px;letter-spacing:-0.029px">Music</div>
<div class="t" id="n9" style="left:211.3px;top:535px;letter-spacing:-0.297px">Videos</div>
<div class="t" id="n10" style="left:211.3px;top:567px;letter-spacing:0.352px">img</div>
<div class="t" id="n11" style="left:211.3px;top:599px;transform:scaleX(0.863)">.ssh</div>
<div class="t" id="s1" style="left:170.0px;top:669px;letter-spacing:-0.098px">2 items</div>
<div class="t gr" id="k1" style="left:309.2px;top:735px;font-size:14px;transform:scaleX(0.906)">Search</div>
<div class="t" id="k2" style="left:858.4px;top:729px;transform:scaleX(0.884)">ENG</div>
<div class="t" id="k3" style="left:864.1px;top:745px;transform:scaleX(0.842)">JA</div>
<div class="t" id="k4" style="left:961.9px;top:728px;letter-spacing:-0.300px">8:23 PM</div>
<div class="t" id="k5" style="left:956.4px;top:745px;letter-spacing:0.173px">9/7/2025</div>
<div class="t dt" id="d1" style="left:9.8px;top:60px;letter-spacing:-0.424px">Recycle Bin</div>
<div class="t dt" id="d2" style="left:13.7px;top:158px;letter-spacing:0.179px">Microsoft</div>
<div class="t dt" id="d3" style="left:25.5px;top:173px;transform:scaleX(0.906)">Edge</div>
</body></html>
